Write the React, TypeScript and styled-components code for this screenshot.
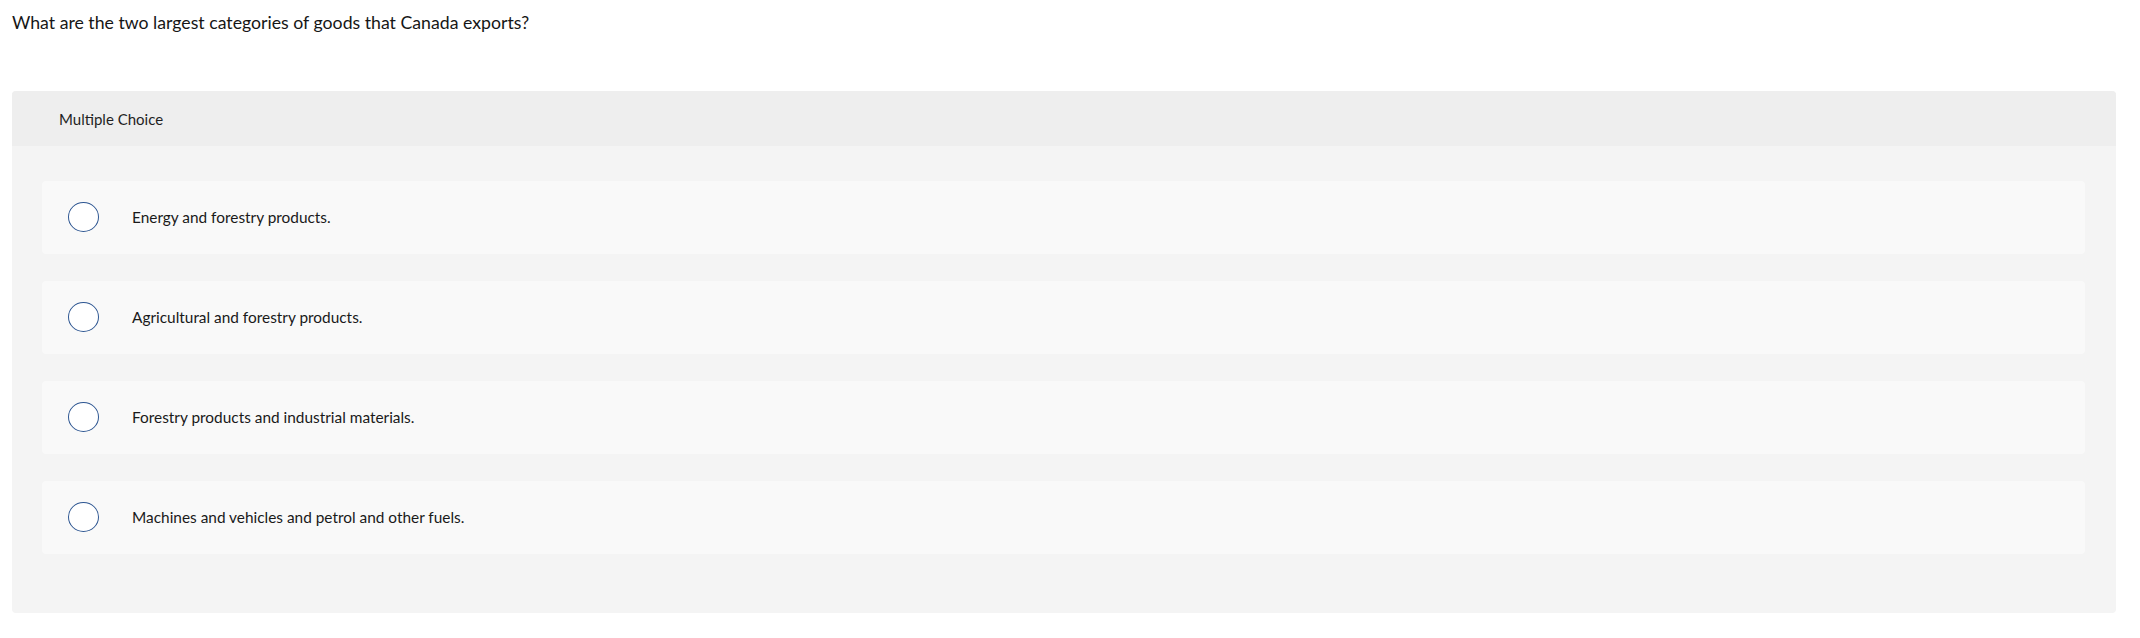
import styled, { createGlobalStyle } from "styled-components";

const GlobalStyle = createGlobalStyle`
  html, body {
    margin: 0;
    padding: 0;
    background: #ffffff;
  }
  body {
    font-family: Lato, "Open Sans", "Liberation Sans", sans-serif;
    color: #1a1a1a;
  }
`;

const Page = styled.div`
  padding: 0 24px 0 12px;
`;

const Question = styled.p`
  margin: 0;
  padding-top: 12px;
  height: 79px;
  font-size: 17.7px;
  line-height: 22px;
  color: #161616;
`;

const Panel = styled.section`
  background: #f4f4f4;
  border-radius: 4px;
  overflow: hidden;
`;

const PanelHeader = styled.header`
  height: 55px;
  display: flex;
  align-items: center;
  padding-left: 47px;
  background: #eeeeee;
  font-size: 15px;
  color: #1f1f1f;
`;

const ChoiceList = styled.div`
  display: flex;
  flex-direction: column;
  gap: 27.5px;
  padding: 35px 31px 59px 30px;
`;

const Choice = styled.label`
  height: 72.5px;
  display: flex;
  align-items: center;
  gap: 33px;
  padding-left: 26px;
  background: #f9f9f9;
  border-radius: 4px;
  font-size: 15.4px;
  color: #1a1a1a;
  cursor: pointer;
`;

const Radio = styled.span<{ checked?: boolean }>`
  flex: none;
  width: 31px;
  height: 30px;
  box-sizing: border-box;
  border-radius: 50%;
  border: 1.5px solid #2c5591;
  background: ${(p) => (p.checked ? "#2c5591" : "#ffffff")};
`;

const choices = [
  "Energy and forestry products.",
  "Agricultural and forestry products.",
  "Forestry products and industrial materials.",
  "Machines and vehicles and petrol and other fuels.",
];

function App() {
  return (
    <>
      <GlobalStyle />
      <Page>
        <Question>What are the two largest categories of goods that Canada exports?</Question>
        <Panel>
          <PanelHeader>Multiple Choice</PanelHeader>
          <ChoiceList>
            {choices.map((c) => (
              <Choice key={c}>
                <Radio />
                <span>{c}</span>
              </Choice>
            ))}
          </ChoiceList>
        </Panel>
      </Page>
    </>
  );
}

export default App;
